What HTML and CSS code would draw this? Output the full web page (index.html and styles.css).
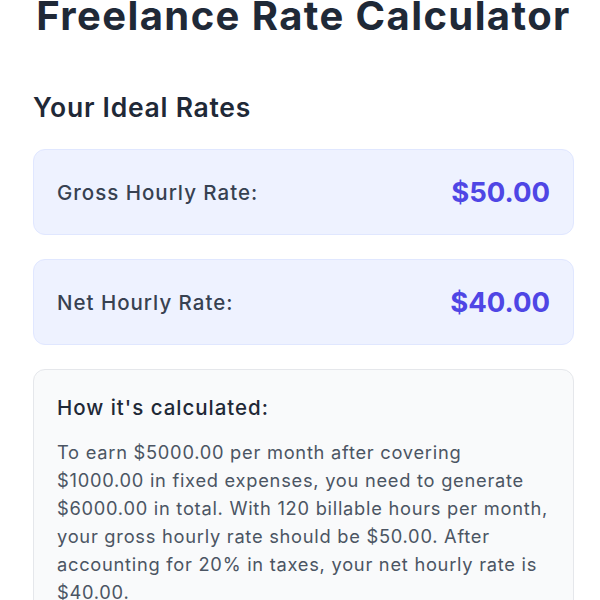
FILE: index.html
```html
<!DOCTYPE html>
<html lang="en">
<head>
<meta charset="utf-8">
<title>Freelance Rate Calculator</title>
<link rel="stylesheet" href="styles.css">
</head>
<body>
<main class="page">
  <h1 class="title">Freelance Rate Calculator</h1>
  <section class="results">
    <h2 class="results-title">Your Ideal Rates</h2>
    <div class="rate-card">
      <span class="rate-label">Gross Hourly Rate:</span>
      <span class="rate-value">$50.00</span>
    </div>
    <div class="rate-card">
      <span class="rate-label">Net Hourly Rate:</span>
      <span class="rate-value">$40.00</span>
    </div>
    <div class="explain-card">
      <h3 class="explain-title">How it's calculated:</h3>
      <p class="explain-text">To earn $5000.00 per month after covering $1000.00 in fixed expenses, you need to generate $6000.00 in total. With 120 billable hours per month, your gross hourly rate should be $50.00. After accounting for 20% in taxes, your net hourly rate is $40.00.</p>
    </div>
  </section>
</main>
</body>
</html>
```

FILE: styles.css
```css
* { box-sizing: border-box; }
html, body { margin: 0; padding: 0; background: #ffffff; }
body {
  font-family: Inter, "Noto Sans", "Liberation Sans", sans-serif;
  color: #1f2937;
  overflow: hidden;
}
.page {
  width: 541px;
  margin: -8px 0 0 33px;
}
.title {
  margin: 0 -20px;
  font-size: 40px;
  line-height: 48px;
  font-weight: 700;
  letter-spacing: 0.035em;
  text-align: center;
  color: #1f2937;
  white-space: nowrap;
}
.results {
  margin-top: 51px;
  display: flex;
  flex-direction: column;
}
.results-title {
  margin: 0 0 26px;
  font-size: 26.5px;
  line-height: 32px;
  font-weight: 600;
  letter-spacing: 0.028em;
  color: #1f2937;
}
.rate-card {
  display: flex;
  align-items: center;
  justify-content: space-between;
  height: 86px;
  padding: 0 23px;
  background: #eef2ff;
  border: 1px solid #e0e7ff;
  border-radius: 12px;
  margin-bottom: 24px;
}
.rate-label {
  font-size: 20.5px;
  font-weight: 500;
  letter-spacing: 0.048em;
  color: #374151;
}
.rate-value {
  font-size: 27.5px;
  font-weight: 700;
  color: #4f46e5;
}
.explain-card {
  background: #f9fafb;
  border: 1px solid #e5e7eb;
  border-radius: 12px;
  padding: 24px 23px;
}
.explain-title {
  margin: 0 0 16px;
  font-size: 20.5px;
  line-height: 28px;
  font-weight: 500;
  letter-spacing: 0.048em;
  color: #1f2937;
}
.explain-text {
  margin: 0;
  font-size: 18.3px;
  line-height: 28px;
  letter-spacing: 0.04em;
  color: #4b5563;
}
```
